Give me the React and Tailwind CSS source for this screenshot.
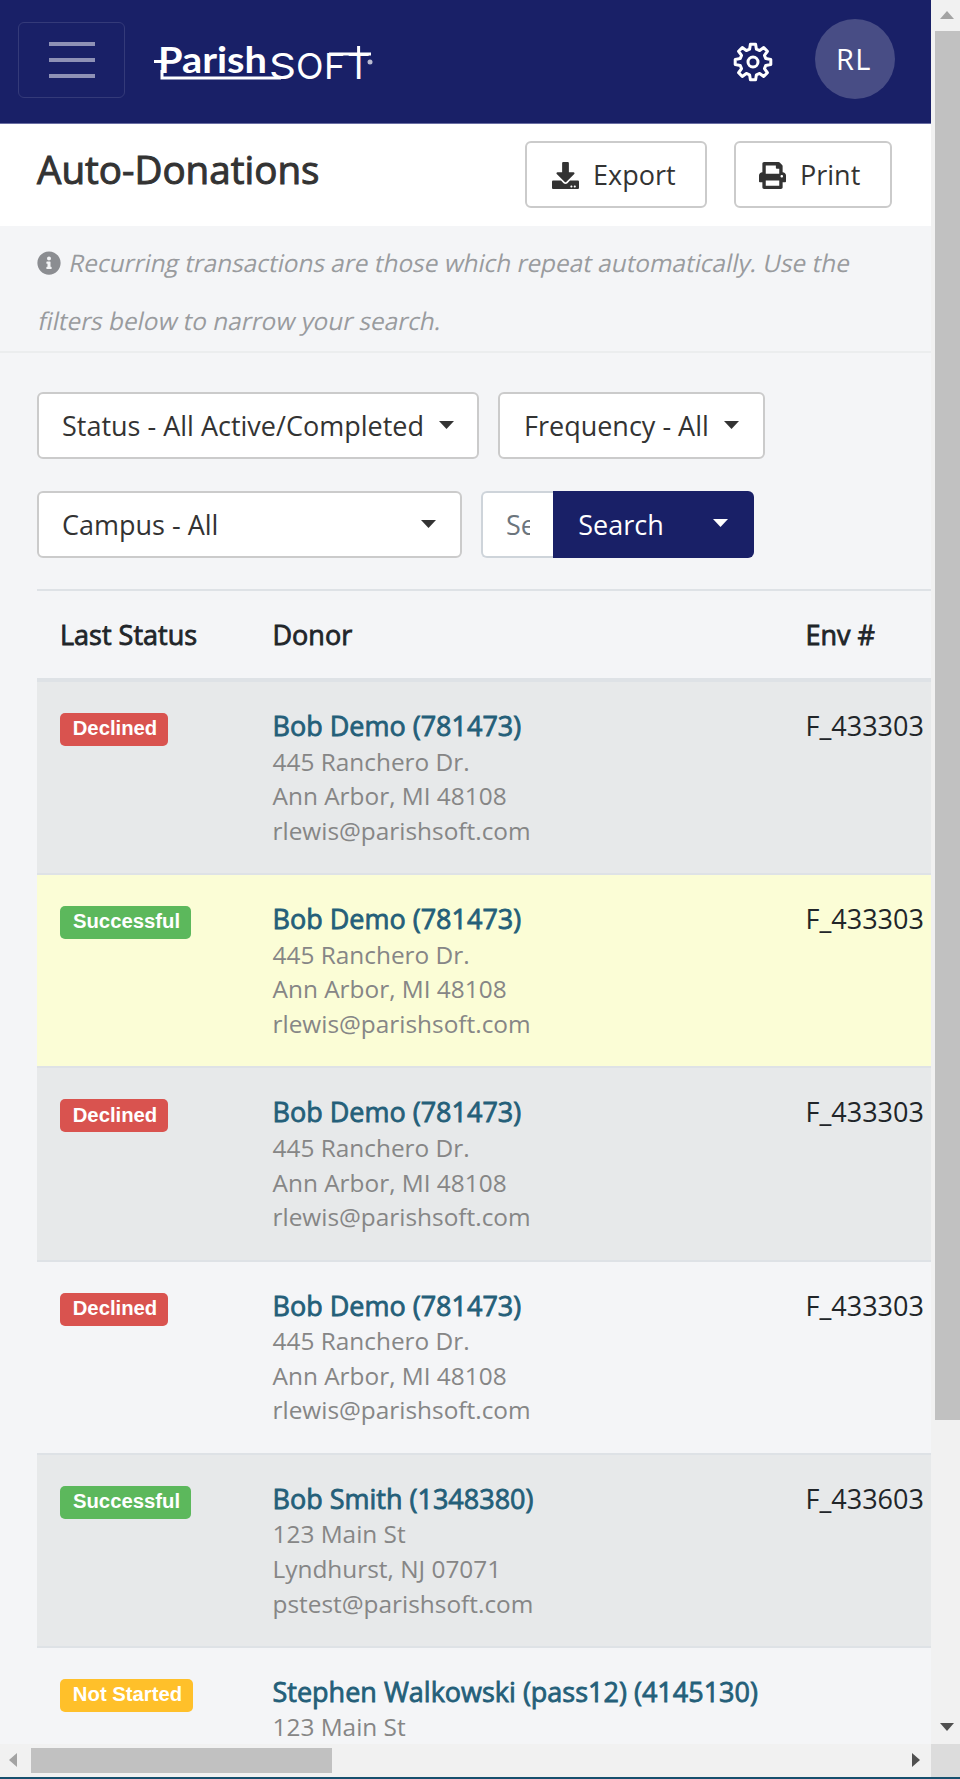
import { FaDownload, FaPrint, FaInfoCircle } from 'react-icons/fa';

const rows = [
  { status: 'Declined', name: 'Bob Demo (781473)', lines: ['445 Ranchero Dr.', 'Ann Arbor, MI 48108', 'rlewis@parishsoft.com'], env: 'F_433303', bg: 'bg-[#e7e9ea]' },
  { status: 'Successful', name: 'Bob Demo (781473)', lines: ['445 Ranchero Dr.', 'Ann Arbor, MI 48108', 'rlewis@parishsoft.com'], env: 'F_433303', bg: 'bg-[#fbfdd6]' },
  { status: 'Declined', name: 'Bob Demo (781473)', lines: ['445 Ranchero Dr.', 'Ann Arbor, MI 48108', 'rlewis@parishsoft.com'], env: 'F_433303', bg: 'bg-[#e7e9ea]' },
  { status: 'Declined', name: 'Bob Demo (781473)', lines: ['445 Ranchero Dr.', 'Ann Arbor, MI 48108', 'rlewis@parishsoft.com'], env: 'F_433303', bg: '' },
  { status: 'Successful', name: 'Bob Smith (1348380)', lines: ['123 Main St', 'Lyndhurst, NJ 07071', 'pstest@parishsoft.com'], env: 'F_433603', bg: 'bg-[#e7e9ea]' },
  { status: 'Not Started', name: 'Stephen Walkowski (pass12) (4145130)', lines: ['123 Main St'], env: '', bg: '' },
];

const badges = {
  Declined: 'bg-[#d9534f] w-[108px]',
  Successful: 'bg-[#5cb85c] w-[131px]',
  'Not Started': 'bg-[#ffc02a] w-[133px]',
};

function Caret({ className = 'text-[#333]' }) {
  return (
    <svg width="15" height="8" viewBox="0 0 16 9" preserveAspectRatio="none" className={`-mt-[3px] ${className}`}>
      <path d="M0 0h16L8 9z" fill="currentColor" />
    </svg>
  );
}

// eight-tooth outline, one tooth per 45 degrees
const gearPoints = Array.from({ length: 8 }, (_, k) => {
  const a = (k * Math.PI) / 4;
  return [[-3.4, -12.8], [-2.6, -17.8], [2.6, -17.8], [3.4, -12.8]]
    .map(([x, y]) => `${(x * Math.cos(a) - y * Math.sin(a)).toFixed(2)},${(x * Math.sin(a) + y * Math.cos(a)).toFixed(2)}`)
    .join(' ');
}).join(' ');

function Gear() {
  return (
    <svg width="40" height="40" viewBox="-20 -20 40 40" fill="none" stroke="currentColor" strokeWidth="3" strokeLinejoin="round" className="ml-auto mt-[42px] text-white">
      <polygon points={gearPoints} />
      <circle r="5" />
    </svg>
  );
}

function Logo() {
  return (
    <svg width="222" height="42" viewBox="0 0 222 42" className="overflow-visible text-white">
      <text x="5" y="31" fill="currentColor" fontSize="37" fontWeight="700" textLength="109" lengthAdjust="spacingAndGlyphs" className="font-['Lato']">Parish</text>
      <text x="116" y="37" fill="currentColor" fontSize="36" textLength="27" lengthAdjust="spacingAndGlyphs" className="font-['Inter']">S</text>
      <text x="143 171 194" y="37" fill="currentColor" fontSize="36" className="font-['Inter']">OFT</text>
      <path d="M1 19.5h10M9 28v8h119" fill="none" stroke="currentColor" strokeWidth="3" />
      <path d="M176 12h42M205.6 4v10" fill="none" stroke="currentColor" strokeWidth="3" />
      <circle cx="217" cy="20" r="2.5" fill="currentColor" opacity=".7" />
    </svg>
  );
}

function Navbar() {
  return (
    <nav className="flex h-[124px] shrink-0 items-start border-b border-[#6a6ea3] bg-[#192067] pl-[18px] pr-[36px]">
      <button className="mt-[22px] flex h-[76px] w-[107px] flex-col items-center justify-center gap-3 rounded-md border border-[#343a79]">
        <span className="h-1 w-[46px] bg-[#8e91b6]" />
        <span className="h-1 w-[46px] bg-[#8e91b6]" />
        <span className="h-1 w-[46px] bg-[#8e91b6]" />
      </button>
      <div className="ml-[28px] mt-[42px]">
        <Logo />
      </div>
      <Gear />
      <div className="ml-[42px] mt-[19px] flex h-20 w-20 items-center justify-center rounded-full bg-[#484d85] pr-[2px] text-[29px] font-medium tracking-[1.5px] text-white">
        RL
      </div>
    </nav>
  );
}

function Filters() {
  const box = 'flex h-[67px] items-center justify-between rounded-md border-2 border-[#cbcbcb] bg-white pt-[2px]';
  return (
    <div className="flex flex-col gap-8 pl-[37px] pt-[39px]">
      <div className="flex gap-[19px]">
        <button className={`${box} w-[442px] pl-[23px] pr-[23px]`}>Status - All Active/Completed <Caret /></button>
        <button className={`${box} w-[267px] pl-[24px] pr-[24px]`}>Frequency - All <Caret /></button>
      </div>
      <div className="flex gap-[19px]">
        <button className={`${box} w-[425px] pl-[23px] pr-[24px]`}>Campus - All <Caret /></button>
        <div className="flex">
          <input placeholder="Search" className="h-[67px] w-[72px] rounded-l-md border-2 border-r-0 border-[#ced4da] bg-white pl-[23px] pr-[23px] placeholder:text-[#6c757d]" />
          <button className="h-[67px] w-[136px] bg-[#192067] pt-[2px] text-white">Search</button>
          <button className="flex h-[67px] w-[65px] items-center justify-center rounded-r-md bg-[#192067] pr-[2px]">
            <Caret className="text-white" />
          </button>
        </div>
      </div>
    </div>
  );
}

function DonationsTable() {
  return (
    <div className="ml-[37px] mt-[31px]">
      <div className="flex h-[93px] items-center border-b-4 border-t-2 border-[#dee2e6] pl-[23px] pt-[2px] text-[#212529] [-webkit-text-stroke:0.8px]">
        <div className="w-[212.5px]">Last Status</div>
        <div className="w-[533px]">Donor</div>
        <div>Env #</div>
      </div>
      {rows.map((row, i) => (
        <div key={i} className={`flex h-[193.2px] items-start border-b-2 border-[#dee2e6] pl-[23px] ${row.bg}`}>
          <div className="w-[212.5px] pt-[31px]">
            <div className={`flex h-[33px] items-center justify-center rounded-[5px] pb-[2px] pl-[2px] font-['Liberation_Sans'] text-[20.3px] font-bold text-white ${badges[row.status]}`}>
              {row.status}
            </div>
          </div>
          <div className="w-[533px] pt-[25px]">
            <div className="whitespace-nowrap leading-[37.5px] text-[#245f79] [-webkit-text-stroke:0.8px]">{row.name}</div>
            {row.lines.map((line) => (
              <div key={line} className="text-[24.4px] leading-[34.7px] text-[#868686]">{line}</div>
            ))}
          </div>
          <div className="pt-[25px] leading-[37.5px] text-[#212529]">{row.env}</div>
        </div>
      ))}
    </div>
  );
}

export default function App() {
  return (
    <div className="flex h-[1779px] w-[960px] flex-col overflow-hidden bg-[#f4f5f7] font-['Open_Sans',sans-serif] text-[27px] text-[#333]">
      <div className="flex h-[1744px] shrink-0">
        <main className="flex w-[931px] flex-col overflow-hidden">
          <Navbar />
          <header className="flex h-[102px] shrink-0 items-start bg-white pl-[37px] pr-[39px] pt-[17px]">
            <h1 className="mt-[3px] text-[38.6px] leading-[50px] [-webkit-text-stroke:1px]">Auto-Donations</h1>
            <button className="ml-auto flex h-[67px] w-[182px] items-center gap-[14px] rounded-md border-2 border-[#cbcbcb] pl-[25px] pt-[2px]">
              <FaDownload size={27} /> Export
            </button>
            <button className="ml-[27px] flex h-[67px] w-[158px] items-center gap-[14px] rounded-md border-2 border-[#cbcbcb] pl-[23px] pt-[2px]">
              <FaPrint size={27} /> Print
            </button>
          </header>
          <div className="h-[127px] shrink-0 border-b-2 border-[#ebedee] pl-[37px] pt-[8px] text-[24.35px] leading-[58px] text-[#999b9e]">
            <div className="flex items-center gap-[9px] whitespace-nowrap">
              <FaInfoCircle className="text-[#8b8d91]" size={24} />
              <span className="-skew-x-12">Recurring transactions are those which repeat automatically. Use the</span>
            </div>
            <div className="-skew-x-12 pl-[2px]">filters below to narrow your search.</div>
          </div>
          <Filters />
          <DonationsTable />
        </main>
        <div className="flex w-[29px] flex-col items-end bg-[#f1f1f1]">
          <svg width="25" height="31" className="shrink-0"><path d="M5 19l7-8 7 8z" fill="#a3a3a3" /></svg>
          <div className="h-[1389px] w-[25px] bg-[#c1c1c1]" />
          <svg width="25" height="31" className="mt-auto shrink-0"><path d="M5 10h14l-7 8z" fill="#505050" /></svg>
        </div>
      </div>
      <div className="flex h-[33px] shrink-0 items-center bg-[#f1f1f1]">
        <svg width="31" height="25"><path d="M17 5v14l-8-7z" fill="#a3a3a3" /></svg>
        <div className="h-[25px] w-[301px] bg-[#c1c1c1]" />
        <svg width="31" height="25" className="ml-auto"><path d="M12 5v14l8-7z" fill="#505050" /></svg>
        <div className="h-full w-[29px] bg-[#dcdcdc]" />
      </div>
      <div className="h-[2px] shrink-0 bg-[#17506e]" />
    </div>
  );
}
